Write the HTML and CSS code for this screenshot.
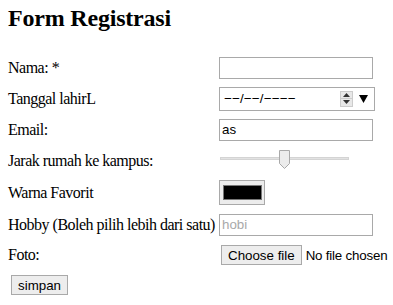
FILE: index.html
```html
<!DOCTYPE html>
<html>
<head>
<meta charset="utf-8">
<link rel="stylesheet" href="styles.css">
</head>
<body>
<div class="page">
  <h1 class="title">Form Registrasi</h1>
  <form class="form">
    <div class="row">
      <div class="label">Nama: *</div>
      <div class="field"><input class="text" type="text"></div>
    </div>
    <div class="row">
      <div class="label">Tanggal lahirL</div>
      <div class="field">
        <div class="date">
          <span class="date-text">−−/−−/−−−−</span>
          <span class="spin">
            <span class="spin-half"><svg width="7" height="4" viewBox="0 0 7 4"><path d="M3.5 0 L7 4 L0 4 Z" fill="#333"/></svg></span>
            <span class="spin-half"><svg width="7" height="4" viewBox="0 0 7 4"><path d="M0 0 L7 0 L3.5 4 Z" fill="#333"/></svg></span>
          </span>
          <svg class="drop" width="9" height="8" viewBox="0 0 9 8"><path d="M0 0 L9 0 L4.5 8 Z" fill="#000"/></svg>
        </div>
      </div>
    </div>
    <div class="row">
      <div class="label">Email:</div>
      <div class="field"><input class="text" type="text" value="as"></div>
    </div>
    <div class="row">
      <div class="label">Jarak rumah ke kampus:</div>
      <div class="field">
        <div class="range">
          <div class="track"></div>
          <svg class="thumb" width="11" height="19" viewBox="0 0 11 19"><path d="M0.5 0.5 H10.5 V13.5 L5.5 18.5 L0.5 13.5 Z" fill="#ececec" stroke="#a9a9a9"/></svg>
        </div>
      </div>
    </div>
    <div class="row row-color">
      <div class="label">Warna Favorit</div>
      <div class="field"><div class="color"><div class="swatch"></div></div></div>
    </div>
    <div class="row">
      <div class="label">Hobby (Boleh pilih lebih dari satu)</div>
      <div class="field"><input class="text" type="text" placeholder="hobi"></div>
    </div>
    <div class="row row-sm">
      <div class="label">Foto:</div>
      <div class="field file">
        <span class="btn">Choose file</span>
        <span class="file-text">No file chosen</span>
      </div>
    </div>
    <div class="row row-sm">
      <div class="label"><span class="btn btn-save">simpan</span></div>
    </div>
  </form>
</div>
</body>
</html>
```

FILE: styles.css
```css
html, body {
  margin: 0;
  padding: 0;
  background: #fff;
  overflow: hidden;
}
.page {
  padding: 5px 8px 0 8px;
  font-family: "Liberation Serif", "Times New Roman", serif;
  color: #000;
}
.title {
  margin: 0;
  font-size: 24px;
  line-height: 27px;
  font-weight: bold;
  letter-spacing: -0.2px;
}
.form {
  margin: 20px 0 0 0;
  display: flex;
  flex-direction: column;
}
.row {
  display: grid;
  grid-template-columns: 211px 166px;
  height: 31px;
  align-items: center;
  font-size: 16px;
  letter-spacing: -0.5px;
}
.row-color {
  height: 33px;
}
.row-sm {
  height: 30px;
}
.label {
  white-space: nowrap;
}
.field {
  display: flex;
  align-items: center;
  letter-spacing: 0;
  white-space: nowrap;
}
.text {
  box-sizing: border-box;
  width: 154px;
  height: 22px;
  margin: 0;
  padding: 1px 2px;
  border: 1px solid #a9a9a9;
  font-family: "Liberation Sans", Arial, sans-serif;
  font-size: 13.33px;
  color: #000;
  outline: none;
}
.text::placeholder {
  color: #a9a9a9;
}
.date {
  box-sizing: border-box;
  width: 156px;
  height: 24px;
  border: 1px solid #a9a9a9;
  display: flex;
  align-items: center;
  padding-left: 4px;
  font-family: "Liberation Sans", Arial, sans-serif;
  font-size: 13.33px;
}
.date-text {
  flex: 1;
  letter-spacing: 0.2px;
}
.spin {
  display: flex;
  flex-direction: column;
  width: 13px;
  height: 16px;
  margin-right: 6px;
  border: 1px solid #ccc;
  box-sizing: border-box;
}
.spin-half {
  flex: 1;
  display: flex;
  align-items: center;
  justify-content: center;
  background: #e8e8e8;
}
.spin-half + .spin-half {
  border-top: 1px solid #ccc;
}
.drop {
  margin-right: 6px;
}
.range {
  position: relative;
  width: 129px;
  height: 19px;
  margin-left: 1px;
  margin-top: -3px;
}
.track {
  position: absolute;
  left: 0;
  right: 0;
  top: 7px;
  height: 3px;
  background: #e2e2e2;
  border: 1px solid #d4d4d4;
  box-sizing: border-box;
}
.thumb {
  position: absolute;
  left: 59px;
  top: 0;
}
.color {
  box-sizing: border-box;
  width: 46px;
  height: 25px;
  border: 1px solid #a9a9a9;
  background: #ececec;
  display: flex;
  align-items: center;
  justify-content: center;
}
.swatch {
  box-sizing: border-box;
  width: 39px;
  height: 15px;
  background: #000;
  border: 1px solid #777;
}
.btn {
  display: inline-flex;
  align-items: center;
  box-sizing: border-box;
  height: 20px;
  padding: 0 6px;
  border: 1px solid #a9a9a9;
  background: #ededed;
  font-family: "Liberation Sans", Arial, sans-serif;
  font-size: 13.33px;
  letter-spacing: 0;
  color: #000;
  white-space: nowrap;
}
.file {
  padding-left: 2px;
  font-family: "Liberation Sans", Arial, sans-serif;
  font-size: 13.33px;
}
.file-text {
  margin-left: 4px;
  letter-spacing: -0.2px;
}
.btn-save {
  margin-left: 3px;
  height: 20px;
}
```
